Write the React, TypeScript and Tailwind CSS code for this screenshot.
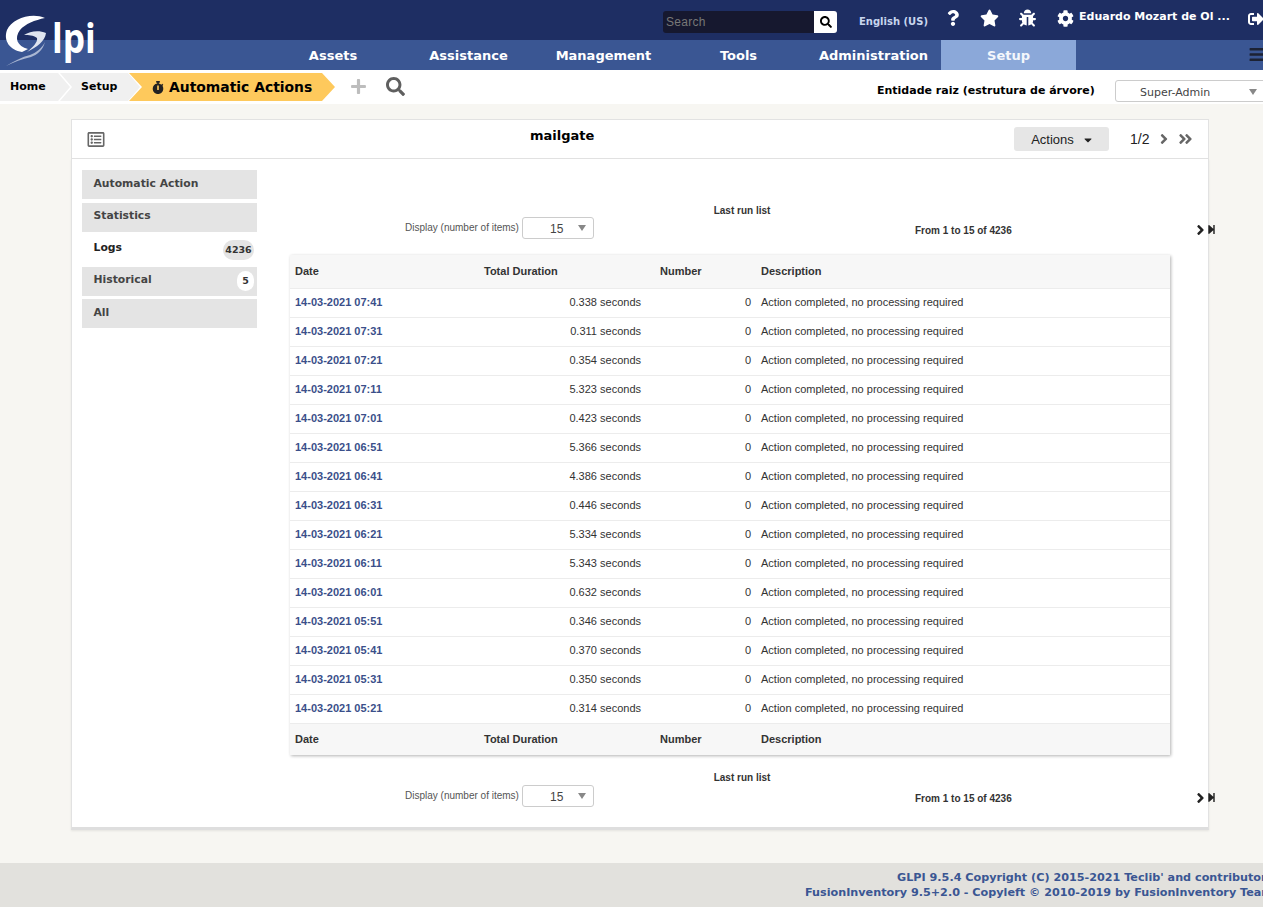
import {
  FaAngleDoubleRight,
  FaAngleRight,
  FaBars,
  FaBug,
  FaCaretDown,
  FaCog,
  FaPlus,
  FaQuestion,
  FaRegListAlt,
  FaSearch,
  FaSignOutAlt,
  FaStar,
  FaStepForward,
  FaStopwatch,
} from "react-icons/fa";

const rows = [
  ["14-03-2021 07:41", "0.338"],
  ["14-03-2021 07:31", "0.311"],
  ["14-03-2021 07:21", "0.354"],
  ["14-03-2021 07:11", "5.323"],
  ["14-03-2021 07:01", "0.423"],
  ["14-03-2021 06:51", "5.366"],
  ["14-03-2021 06:41", "4.386"],
  ["14-03-2021 06:31", "0.446"],
  ["14-03-2021 06:21", "5.334"],
  ["14-03-2021 06:11", "5.343"],
  ["14-03-2021 06:01", "0.632"],
  ["14-03-2021 05:51", "0.346"],
  ["14-03-2021 05:41", "0.370"],
  ["14-03-2021 05:31", "0.350"],
  ["14-03-2021 05:21", "0.314"],
];

const menu = [
  { label: "Assets", width: "w-[136px]" },
  { label: "Assistance", width: "w-[135px]" },
  { label: "Management", width: "w-[135px]" },
  { label: "Tools", width: "w-[135px]" },
  { label: "Administration", width: "w-[135px]" },
];

function Logo() {
  return (
    <div className="relative w-[100px] h-[70px] shrink-0">
      <svg viewBox="0 0 100 70" className="absolute left-0 top-0 w-[100px] h-[70px]">
        <path fill="#fff" d="M45 18 C31 12 12 19 7 30 C3 41 10 50 22 52 L28 49 C17 46 14 38 20 30 C25 24 35 20 45 18 Z" />
        <path fill="#dfe4ef" d="M24 35 C30 31 39 30 46 33 C45 41 37 47 27 52 C33 47 38 42 37 38 C33 35 29 35 24 35 Z" />
        <path fill="#a9b6d2" d="M6 66 C14 61 22 57 30 55 C36 53 42 48 45 42 C43 50 37 55 31 57 C22 59 14 62 6 66 Z" />
      </svg>
      <div className="absolute left-[52px] top-[13px] font-['Open_Sans',sans-serif] text-[42px] leading-[48px] font-bold text-white scale-x-[0.84] origin-left">
        lpi
      </div>
    </div>
  );
}

function Pager({ top, gap }: { top: string; gap: string }) {
  return (
    <div className={top}>
      <div className="ml-[230px] w-[880px] text-center text-[10px] leading-[12px] font-bold font-['Liberation_Sans',sans-serif] text-[#333]">Last run list</div>
      <div className={`relative h-[24px] font-['Liberation_Sans',sans-serif] ${gap}`}>
        <span className="absolute left-[333px] top-[4px] text-[10px] leading-[14px] text-[#555]">Display (number of items)</span>
        <div className="absolute left-[450px] top-0 w-[72px] h-[22px] pt-[1px] bg-white border border-[#ccc] rounded-[3px] text-[12px] text-[#444] flex items-center pl-[27px]">
          15
          <span className="absolute right-[7px] top-[7px] w-0 h-0 border-x-[4px] border-x-transparent border-t-[6px] border-t-[#888]" />
        </div>
        <span className="absolute left-[843px] top-[7px] text-[10px] leading-[14px] font-bold text-[#333]">From 1 to 15 of 4236</span>
        <FaAngleRight className="absolute left-[1122px] top-[5px] w-[13px] h-[16px] text-[#222]" />
        <FaStepForward className="absolute left-[1135px] top-[7px] w-[9px] h-[11px] text-[#222]" />
      </div>
    </div>
  );
}

function SideItem({ label, badge, active, className = "pt-[5px]" }: { label: string; badge?: string; active?: boolean; className?: string }) {
  return (
    <div className={`relative h-[29px] pl-[11.5px] text-[10.8px] leading-[16px] font-bold ${active ? "bg-white text-[#222]" : "bg-[#e4e4e4] text-[#444]"} ${className}`}>
      {label}
      {badge && (
        <span className={`absolute right-[3px] flex items-center justify-center text-[9.5px] font-bold text-[#333] rounded-full ${active ? "top-[5px] h-[20px] w-[31px] bg-[#e4e4e4]" : "top-[4px] h-[20px] w-[17px] bg-white"}`}>
          {badge}
        </span>
      )}
    </div>
  );
}

export default function App() {
  const headRow = (
    <>
      <th className="px-[5px] text-left font-bold w-[189px]">Date</th>
      <th className="px-[5px] text-left font-bold w-[176px]">Total Duration</th>
      <th className="px-[5px] text-left font-bold w-[101px]">Number</th>
      <th className="px-[5px] text-left font-bold">Description</th>
    </>
  );

  return (
    <div className="w-[1263px] h-[907px] overflow-hidden bg-[#f7f6f2] flex flex-col font-['DejaVu_Sans','Liberation_Sans',sans-serif]">
      <div className="relative h-[40px] bg-[#1e2e63] shrink-0 flex items-center">
        <div className="absolute left-0 top-0 z-10">
          <Logo />
        </div>
        <div className="ml-[663px] mt-[3px] w-[174px] h-[22px] flex rounded-[3px] overflow-hidden shrink-0">
          <div className="w-[151px] bg-[#16182f] text-[#777] text-[12px] pl-[3px] leading-[22px] font-['Liberation_Sans',sans-serif] tracking-[0.3px]">Search</div>
          <div className="flex-1 bg-white flex items-center justify-center">
            <FaSearch className="w-[12px] h-[12px] text-black" />
          </div>
        </div>
        <span className="ml-[22px] mt-[3px] w-[68px] shrink-0 text-[10px] font-bold text-[#c8d6ee] whitespace-nowrap">English (US)</span>
        <FaQuestion className="ml-[20px] mb-[4px] w-[12px] h-[18px] text-white shrink-0" />
        <FaStar className="ml-[21px] mb-[4px] w-[19px] h-[18px] text-white shrink-0" />
        <FaBug className="ml-[20px] mb-[4px] w-[17px] h-[18px] text-white shrink-0" />
        <FaCog className="ml-[21px] mb-[4px] w-[17px] h-[17px] text-white shrink-0" />
        <span className="ml-[5px] mb-[6px] w-[150px] shrink-0 text-[11px] font-bold text-white whitespace-nowrap">Eduardo Mozart de Ol ...</span>
        <FaSignOutAlt className="ml-[18px] mb-[2px] w-[18px] h-[16px] text-white shrink-0" />
      </div>

      <div className="relative h-[30px] bg-[#3a5693] shrink-0 flex pl-[265px] text-[13px] font-bold text-white">
        {menu.map((m) => (
          <div key={m.label} className={`${m.width} text-center leading-[31px]`}>
            {m.label}
          </div>
        ))}
        <div className="w-[135px] bg-[#8ba8d9] text-center leading-[31px] text-[#f4f7fc]">Setup</div>
        <FaBars className="absolute left-[1249px] top-[6px] w-[16px] h-[17px] text-[#1c2233]" />
      </div>

      <div className="relative h-[34px] bg-white shrink-0 flex items-start pt-[3px]">
        <div className="w-[70px] h-[28px] bg-[#f0f0f0] flex items-center pl-[10px] text-[11px] font-bold text-black [clip-path:polygon(0_0,58px_0,70px_50%,58px_100%,0_100%)]">
          Home
        </div>
        <div className="-ml-[10px] w-[80px] h-[28px] bg-[#f0f0f0] flex items-center pl-[21px] text-[11px] font-bold text-black [clip-path:polygon(0_0,68px_0,80px_50%,68px_100%,0_100%,12px_50%)]">
          Setup
        </div>
        <div className="-ml-[11px] w-[206px] h-[28px] bg-[#fec95c] flex items-center pl-[23px] text-[13.9px] font-bold text-black whitespace-nowrap [clip-path:polygon(0_0,193px_0,206px_50%,193px_100%,0_100%,13px_50%)]">
          <FaStopwatch className="w-[12px] h-[13px] mr-[5px] text-[#222] shrink-0" />
          Automatic Actions
        </div>
        <FaPlus className="ml-[15px] mt-[5px] w-[17px] h-[17px] text-[#bdbdbd]" />
        <FaSearch className="ml-[19px] mt-[4px] w-[19px] h-[19px] text-[#5f5f5f]" />
        <span className="absolute left-[877px] top-[14px] text-[11px] leading-[14px] font-bold text-black whitespace-nowrap">Entidade raiz (estrutura de árvore)</span>
        <div className="absolute left-[1115px] top-[10px] w-[155px] h-[22px] border border-[#ccc] rounded-[3px] bg-white text-[11px] text-[#444] leading-[23px] pl-[24px]">
          Super-Admin
          <span className="absolute left-[133px] top-[8px] w-0 h-0 border-x-[4px] border-x-transparent border-t-[6px] border-t-[#888]" />
        </div>
      </div>

      <div className="h-[759px] shrink-0 pl-[71px] pt-[15px]">
        <div className="w-[1138px] h-[40px] bg-white border border-[#e2e2e2] flex items-center relative">
          <FaRegListAlt className="ml-[15px] w-[18px] h-[17px] text-[#666]" />
          <span className="absolute left-[458px] top-[7px] text-[13px] leading-[18px] font-bold text-black">mailgate</span>
          <div className="absolute left-[942px] top-[7px] w-[95px] h-[24px] pt-[1px] pl-[1px] bg-[#e6e6e6] rounded-[3px] flex items-center justify-center gap-[9px] text-[13px] text-[#222] font-['Liberation_Sans',sans-serif]">
            Actions
            <FaCaretDown className="w-[10px] h-[12px] text-[#222]" />
          </div>
          <span className="absolute left-[1058px] top-[10px] text-[14px] leading-[18px] text-[#222] font-['Liberation_Sans',sans-serif]">1/2</span>
          <FaAngleRight className="absolute left-[1085px] top-[11px] w-[14px] h-[16px] text-[#666]" />
          <FaAngleDoubleRight className="absolute left-[1105px] top-[11px] w-[17px] h-[16px] text-[#666]" />
        </div>

        <div className="relative w-[1138px] h-[671px] bg-white border-r border-[#e2e2e2] border-l border-b-[3px] border-b-[#dedede] shadow-[0_1px_2px_rgba(0,0,0,0.08)]">
          <div className="absolute left-[10px] top-[11px] w-[175px] flex flex-col gap-[3px]">
            <SideItem label="Automatic Action" className="pt-[6px]" />
            <SideItem label="Statistics" className="mt-[1px] pt-[5px]" />
            <SideItem label="Logs" badge="4236" active />
            <SideItem label="Historical" badge="5" />
            <SideItem label="All" className="pt-[6px]" />
          </div>

          <Pager top="pt-[46px]" gap="mt-0" />

          <table className="ml-[218px] mt-[14px] w-[880px] border-collapse table-fixed font-['Liberation_Sans',sans-serif] text-[11px] text-[#333] shadow-[1px_1px_3px_rgba(0,0,0,0.3)]">
            <thead>
              <tr className="h-[33px] bg-[#f7f7f7] text-[#333]">{headRow}</tr>
            </thead>
            <tbody>
              {rows.map(([date, duration]) => (
                <tr key={date} className="h-[29px] border-t border-[#ececec] bg-white">
                  <td className="px-[5px] text-[#3a4f8a] font-bold">{date}</td>
                  <td className="pr-[14px] text-right">{duration} seconds</td>
                  <td className="pr-[5px] text-right">0</td>
                  <td className="px-[5px]">Action completed, no processing required</td>
                </tr>
              ))}
            </tbody>
            <tfoot>
              <tr className="h-[32px] bg-[#f7f7f7] border-t border-[#ececec]">{headRow}</tr>
            </tfoot>
          </table>

          <Pager top="pt-[17px]" gap="mt-[1px]" />
        </div>
      </div>

      <div className="h-[44px] shrink-0 bg-[#e2e1dd] pt-[7px] text-[11.2px] leading-[15px] font-bold text-[#3a5693] whitespace-nowrap flex flex-col items-start pl-[805px]">
        <span className="ml-[92px]">GLPI 9.5.4 Copyright (C) 2015-2021 Teclib' and contributors</span>
        <span>FusionInventory 9.5+2.0 - Copyleft © 2010-2019 by FusionInventory Team</span>
      </div>
    </div>
  );
}
